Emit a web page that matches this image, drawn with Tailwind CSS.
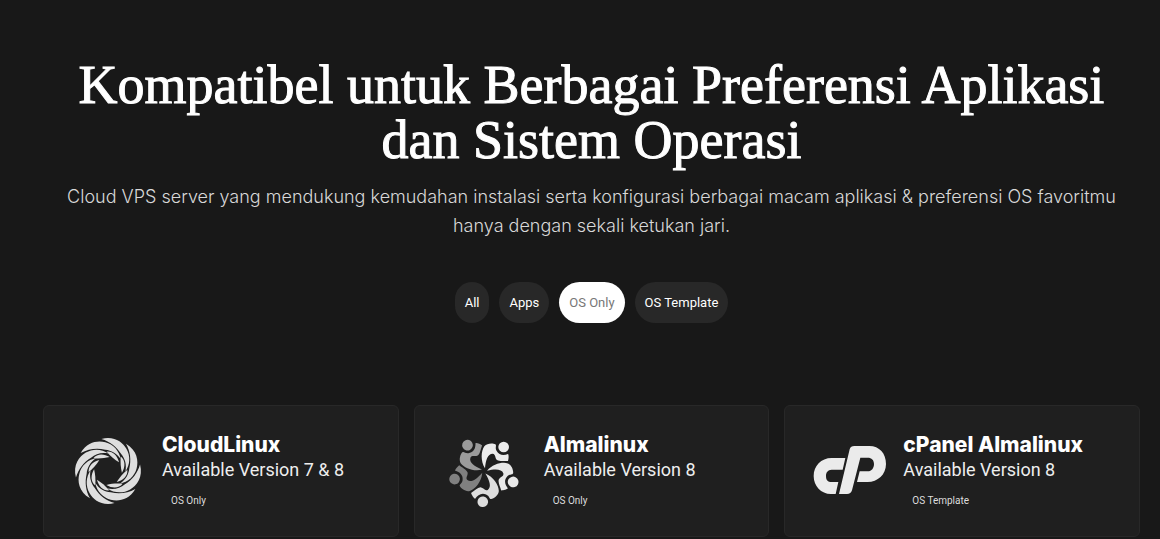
<!DOCTYPE html>
<html lang="id">
<head>
    <meta charset="UTF-8">
    <meta name="viewport" content="width=device-width, initial-scale=1.0">
    <title>Aplikasi dan Sistem Operasi</title>
    <script src="https://cdn.jsdelivr.net/npm/@tailwindcss/browser@4"></script>
</head>
<body class="bg-[#181818] font-['Roboto',sans-serif] text-white">

<!-- Main Container -->
<div class="pl-[43px] pr-5 pt-[58px]">

    <!-- Heading Section -->
    <div class="text-center">
        <h2 class="font-['Liberation_Serif',serif] text-[54px] leading-[55px] font-medium [-webkit-text-stroke:1px_white]">Kompatibel untuk Berbagai Preferensi Aplikasi <br>dan Sistem Operasi</h2>
        <p class="mt-[14px] font-['Inter',sans-serif] text-[18px] leading-[29px] font-light text-[#d8d8d8]">Cloud VPS server yang mendukung kemudahan instalasi serta konfigurasi berbagai macam aplikasi &amp; preferensi OS favoritmu <br>hanya dengan sekali ketukan jari.</p>
    </div>

    <!-- Filter Buttons -->
    <div class="mt-[42px] flex justify-center gap-[10px] text-[13px]">
        <button type="button" class="h-[41px] rounded-full bg-[#282828] px-[10px]">All</button>
        <button type="button" class="h-[41px] rounded-full bg-[#282828] px-[10px]">Apps</button>
        <button type="button" class="h-[41px] rounded-full bg-white px-[10px] text-[#777777]">OS Only</button>
        <button type="button" class="h-[41px] rounded-full bg-[#282828] px-[10px]">OS Template</button>
    </div>

    <!-- OS Cards -->
    <div class="mt-[82px] grid grid-cols-3 gap-[15px]">
        <!-- CloudLinux -->
        <div class="flex items-start gap-[2px] rounded-md border border-[#282828] bg-[#1f1f1f] px-4 pt-5 pb-5">
            <svg class="h-[90px] w-[100px] shrink-0" viewBox="0 0 300 270" aria-hidden="true">
                <defs>
                    <g id="blade">
                        <path d="M-82-54C-62-88-30-92-8-86C16-80 34-60 38-36C26-54 10-62-8-64C-34-70-58-67-82-54Z"/>
                        <path d="M-4-58C14-60 28-46 33-26C20-34 8-44-4-58Z"/>
                    </g>
                </defs>
                <g transform="translate(144 135)" fill="#dedede">
                    <use href="#blade"/>
                    <use href="#blade" transform="rotate(45)"/>
                    <use href="#blade" transform="rotate(90)"/>
                    <use href="#blade" transform="rotate(135)"/>
                    <use href="#blade" transform="rotate(180)"/>
                    <use href="#blade" transform="rotate(225)"/>
                    <use href="#blade" transform="rotate(270)"/>
                    <use href="#blade" transform="rotate(315)"/>
                </g>
            </svg>
            <div>
                <h3 class="mt-1 font-['Inter',sans-serif] text-[21px] leading-[30px] font-extrabold">CloudLinux</h3>
                <p class="text-[18px] leading-5 text-[#eeeeee]">Available Version 7 &amp; 8</p>
                <span class="ml-[9px] mt-[13px] block text-[10px] leading-4 text-[#dddddd]">OS Only</span>
            </div>
        </div>
        <!-- Almalinux -->
        <div class="flex items-start gap-[9px] rounded-md border border-[#282828] bg-[#1f1f1f] px-5 pt-5 pb-5">
            <svg class="h-[90px] w-[100px] shrink-0" viewBox="0 0 300 270" aria-hidden="true">
                <defs>
                    <g id="person">
                        <circle cx="58" cy="-72" r="16"/>
                        <path d="M2-8C-12-30-10-60 0-74C8-84 26-84 33-80C38-76 31-70 37-60C44-47 58-46 71-51C74-48 73-36 71-30C60-31 46-28 38-33C31-40 35-50 25-52C10-52 4-32 2-8Z"/>
                    </g>
                </defs>
                <g transform="translate(148 135)">
                    <use href="#person" fill="#ececec"/>
                    <use href="#person" fill="#e8e8e8" transform="rotate(72)"/>
                    <use href="#person" fill="#dddddd" transform="rotate(144)"/>
                    <use href="#person" fill="#808080" transform="rotate(216)"/>
                    <use href="#person" fill="#9b9b9b" transform="rotate(288)"/>
                </g>
            </svg>
            <div>
                <h3 class="mt-1 font-['Inter',sans-serif] text-[21px] leading-[30px] font-extrabold">Almalinux</h3>
                <p class="text-[18px] leading-5 text-[#eeeeee]">Available Version 8</p>
                <span class="ml-[9px] mt-[13px] block text-[10px] leading-4 text-[#dddddd]">OS Only</span>
            </div>
        </div>
        <!-- cPanel Almalinux -->
        <div class="flex items-start gap-[2px] rounded-md border border-[#282828] bg-[#1f1f1f] px-4 pt-5 pb-5">
            <svg class="h-[90px] w-[100px] shrink-0" viewBox="0 0 300 270" fill="#ebebeb" aria-hidden="true">
                <path d="M92 96H133L125 131H92C80 131 75 140 75 150C75 162 80 168 92 168H112L104 204H90C60 204 38 180 38 150C38 120 60 96 92 96Z"/>
                <path d="M160 60H205C235 60 255 82 255 114C255 146 230 168 200 168H168L176 136H200C212 136 219 126 219 114C219 102 212 95 200 95H178L153 193Q150 204 138 204H114L146 70Q149 60 160 60Z"/>
            </svg>
            <div>
                <h3 class="mt-1 font-['Inter',sans-serif] text-[21px] leading-[30px] font-extrabold">cPanel Almalinux</h3>
                <p class="text-[18px] leading-5 text-[#eeeeee]">Available Version 8</p>
                <span class="ml-[9px] mt-[13px] block text-[10px] leading-4 text-[#dddddd]">OS Template</span>
            </div>
        </div>
    </div>

</div>

</body>
</html>
